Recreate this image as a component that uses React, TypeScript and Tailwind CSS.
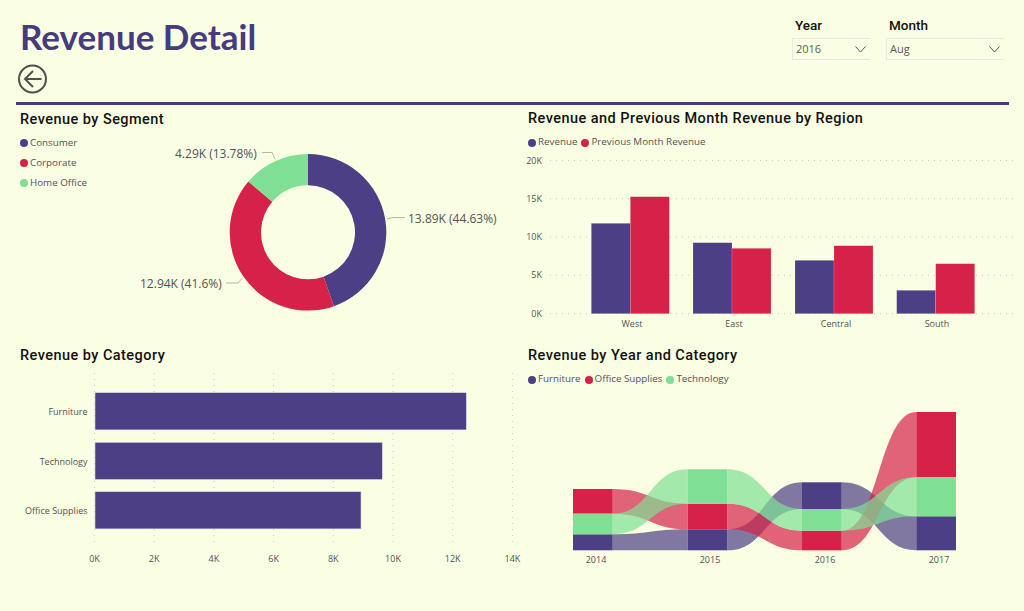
const PURPLE = "#4D3F85";
const RED = "#D62149";
const GREEN = "#7FDF94";
const TEXT = "#52515A";

function ChartTitle({ children, className }: { children: React.ReactNode; className: string }) {
  return (
    <div className={`flex items-center font-['Roboto',sans-serif] font-medium text-[14.5px] tracking-[0.45px] text-[#111] ${className}`}>
      {children}
    </div>
  );
}

function LegendItem({ color, label, dotClass }: { color: string; label: string; dotClass?: string }) {
  return (
    <div className={`flex items-center gap-[2px] ${dotClass ?? ""}`}>
      <span className="w-2 h-2 rounded-full shrink-0" style={{ backgroundColor: color }} />
      <span>{label}</span>
    </div>
  );
}

function Slicer({ label, value, boxClass }: { label: string; value: string; boxClass: string }) {
  return (
    <div className="flex flex-col">
      <div className="h-[23px] pb-[2px] pl-[3px] flex items-center font-['Roboto',sans-serif] font-medium text-[13.5px] text-[#111]">{label}</div>
      <div className={`h-[22px] flex items-center justify-between pl-[3px] pr-1 border-y border-l border-[#e6e7ea] text-[11px] text-[#5b5b60] ${boxClass}`}>
        <span>{value}</span>
        <svg width="11" height="7" viewBox="0 0 11 7" fill="none" stroke="#55555a" strokeWidth="1">
          <path d="M0.5 0.5 L5.5 6 L10.5 0.5" />
        </svg>
      </div>
    </div>
  );
}

function arc(cx: number, cy: number, ro: number, ri: number, from: number, to: number) {
  const pt = (r: number, f: number) => {
    const a = f * 2 * Math.PI - Math.PI / 2;
    return `${(cx + r * Math.cos(a)).toFixed(2)} ${(cy + r * Math.sin(a)).toFixed(2)}`;
  };
  const large = to - from > 0.5 ? 1 : 0;
  return `M${pt(ro, from)} A${ro} ${ro} 0 ${large} 1 ${pt(ro, to)} L${pt(ri, to)} A${ri} ${ri} 0 ${large} 0 ${pt(ri, from)} Z`;
}

function Donut() {
  const cx = 308;
  const cy = 232.3;
  return (
    <svg width="412" height="200" viewBox="100 132 412 200" className="block">
      <path d={arc(cx, cy, 78.3, 47, 0, 0.4463)} fill={PURPLE} />
      <path d={arc(cx, cy, 78.3, 47, 0.4463, 0.8623)} fill={RED} />
      <path d={arc(cx, cy, 78.3, 47, 0.8623, 1)} fill={GREEN} />
      <g fill="none" stroke="#b5b5ae" strokeWidth="1">
        <path d="M387 219 L393 217.5 L405 217.5" />
        <path d="M262 152.5 L272 152.5 L275 159" />
        <path d="M226 283 L238 283 L242 278.5" />
      </g>
      <g fill={TEXT} fontSize="12">
        <text x="408" y="223">13.89K (44.63%)</text>
        <text x="175" y="158">4.29K (13.78%)</text>
        <text x="140" y="288">12.94K (41.6%)</text>
      </g>
    </svg>
  );
}

const regions = [
  { name: "West", x: 591.3, rev: 223.3, prev: 196.7, lx: 632 },
  { name: "East", x: 693, rev: 242.7, prev: 248.3, lx: 734 },
  { name: "Central", x: 795, rev: 260.3, prev: 245.7, lx: 836 },
  { name: "South", x: 896.7, rev: 290.3, prev: 263.7, lx: 937 },
];
const BASE = 313.7;

function RegionBars() {
  const ticks = [
    { label: "20K", y: 160.5 },
    { label: "15K", y: 198.7 },
    { label: "10K", y: 237 },
    { label: "5K", y: 275.3 },
    { label: "0K", y: BASE },
  ];
  return (
    <svg width="512" height="188" viewBox="512 152 512 188" className="block">
      {ticks.map((t) => (
        <g key={t.label}>
          <line x1="550" x2="1018" y1={t.y} y2={t.y} stroke="#c9c9c2" strokeDasharray="1 5" />
          <text x="542" y={t.y + 3} textAnchor="end" fontSize="9" fill={TEXT}>{t.label}</text>
        </g>
      ))}
      {regions.map((r) => (
        <g key={r.name}>
          <rect x={r.x} y={r.rev} width="39" height={BASE - r.rev} fill={PURPLE} stroke="#ffffff" strokeOpacity="0.25" strokeWidth="0.6" />
          <rect x={r.x + 39} y={r.prev} width="39" height={BASE - r.prev} fill={RED} stroke="#ffffff" strokeOpacity="0.25" strokeWidth="0.6" />
          <text x={r.lx} y="326.5" textAnchor="middle" fontSize="9" fill={TEXT}>{r.name}</text>
        </g>
      ))}
    </svg>
  );
}

function CategoryBars() {
  const ticks = ["0K", "2K", "4K", "6K", "8K", "10K", "12K", "14K"];
  const bars = [
    { name: "Furniture", y: 392.7, end: 466.3 },
    { name: "Technology", y: 442.3, end: 382.3 },
    { name: "Office Supplies", y: 491.7, end: 361 },
  ];
  return (
    <svg width="512" height="200" viewBox="0 369 512 200" className="block overflow-visible">
      {ticks.map((t, i) => {
        const x = 94.5 + i * 59.7;
        return (
          <g key={t}>
            <line x1={x} x2={x} y1="373" y2="544" stroke="#c9c9c2" strokeDasharray="1 5" />
            <text x={x} y="562" textAnchor="middle" fontSize="9" fill={TEXT}>{t}</text>
          </g>
        );
      })}
      {bars.map((b) => (
        <g key={b.name}>
          <rect x="95" y={b.y} width={b.end - 95} height="37.2" fill={PURPLE} stroke="#d9d6e6" strokeWidth="0.6" />
          <text x="87.5" y={b.y + 22.5} textAnchor="end" fontSize="9" fill={TEXT}>{b.name}</text>
        </g>
      ))}
    </svg>
  );
}

// stacked top/bottom y of each category per year
const columns = [
  { year: "2014", x: 573, lx: 596, purple: [534.3, 550.3], red: [489, 513.7], green: [513.7, 534.3] },
  { year: "2015", x: 687.7, lx: 710, purple: [529.3, 550.3], red: [503.7, 529.3], green: [469.3, 503.7] },
  { year: "2016", x: 802, lx: 825, purple: [482.3, 509], red: [530.7, 550.3], green: [509, 530.7] },
  { year: "2017", x: 916.3, lx: 939, purple: [516.3, 550.3], red: [412, 477.3], green: [477.3, 516.3] },
];
const series = [
  { key: "purple", color: PURPLE },
  { key: "red", color: RED },
  { key: "green", color: GREEN },
] as const;
const COL_W = 39.7;

function ribbon(x0: number, x1: number, a: number[], b: number[]) {
  const m = (x0 + x1) / 2;
  return `M${x0} ${a[0]} C${m} ${a[0]} ${m} ${b[0]} ${x1} ${b[0]} L${x1} ${b[1]} C${m} ${b[1]} ${m} ${a[1]} ${x0} ${a[1]} Z`;
}

function RibbonChart() {
  return (
    <svg width="512" height="180" viewBox="512 389 512 180" className="block">
      {series.map((s) =>
        columns.slice(0, -1).map((c, i) => {
          const next = columns[i + 1];
          return (
            <path
              key={s.key + c.year}
              d={ribbon(c.x + COL_W, next.x, c[s.key], next[s.key])}
              fill={s.color}
              opacity="0.7"
            />
          );
        }),
      )}
      {columns.map((c) => (
        <g key={c.year}>
          {series.map((s) => (
            <rect key={s.key} x={c.x} y={c[s.key][0]} width={COL_W} height={c[s.key][1] - c[s.key][0]} fill={s.color} />
          ))}
          <text x={c.lx} y="562.5" textAnchor="middle" fontSize="9" fill={TEXT}>{c.year}</text>
        </g>
      ))}
    </svg>
  );
}

export default function App() {
  return (
    <div className="w-[1024px] h-[611px] overflow-hidden flex flex-col bg-[#FAFFE3] font-['Open_Sans',sans-serif]">
      <header className="h-[102px] shrink-0 flex justify-between">
        <div className="pl-4 flex flex-col">
          <h1 className="h-[62px] pl-1 pt-[11px] font-['Lato',sans-serif] font-bold text-[35px] leading-[50px] text-[#463A80]">
            Revenue Detail
          </h1>
          <svg width="32" height="32" viewBox="0 0 32 32" fill="none" stroke="#505050" strokeWidth="2" className="block mt-px ml-px">
            <circle cx="15.5" cy="16" r="13.5" />
            <path d="M24.5 16 H8 M16 8 L8 16 L16 24" />
          </svg>
        </div>
        <div className="flex gap-4 pt-[15px] pr-5">
          <Slicer label="Year" value="2016" boxClass="w-[78px]" />
          <Slicer label="Month" value="Aug" boxClass="w-[118px]" />
        </div>
      </header>

      <div className="ml-4 w-[993px] h-[3px] -mb-px shrink-0 bg-[#463A80]" />

      <main className="grid grid-cols-[512px_512px] grid-rows-[236px_auto]">
        <section className="flex flex-col">
          <ChartTitle className="h-[28px] pl-5 pt-[4px]">Revenue by Segment</ChartTitle>
          <div className="flex">
            <div className="w-[100px] pl-5 pt-px text-[9.8px] text-[#52515a]">
              <LegendItem color={PURPLE} label="Consumer" dotClass="h-5" />
              <LegendItem color={RED} label="Corporate" dotClass="h-5" />
              <LegendItem color={GREEN} label="Home Office" dotClass="h-5" />
            </div>
            <Donut />
          </div>
        </section>

        <section className="flex flex-col">
          <ChartTitle className="h-[28px] pl-4 pt-[2px]">Revenue and Previous Month Revenue by Region</ChartTitle>
          <div className="h-5 pl-4 pt-px flex items-center gap-[4px] text-[9.8px] text-[#52515a]">
            <LegendItem color={PURPLE} label="Revenue" />
            <LegendItem color={RED} label="Previous Month Revenue" />
          </div>
          <RegionBars />
        </section>

        <section className="flex flex-col">
          <ChartTitle className="h-[29px] pl-5 pt-[2px]">Revenue by Category</ChartTitle>
          <CategoryBars />
        </section>

        <section className="flex flex-col">
          <ChartTitle className="h-[29px] pl-4 pt-[2px]">Revenue by Year and Category</ChartTitle>
          <div className="h-5 pl-4 pt-px flex items-center gap-[4px] text-[9.8px] text-[#52515a]">
            <LegendItem color={PURPLE} label="Furniture" />
            <LegendItem color={RED} label="Office Supplies" />
            <LegendItem color={GREEN} label="Technology" />
          </div>
          <RibbonChart />
        </section>
      </main>
    </div>
  );
}
